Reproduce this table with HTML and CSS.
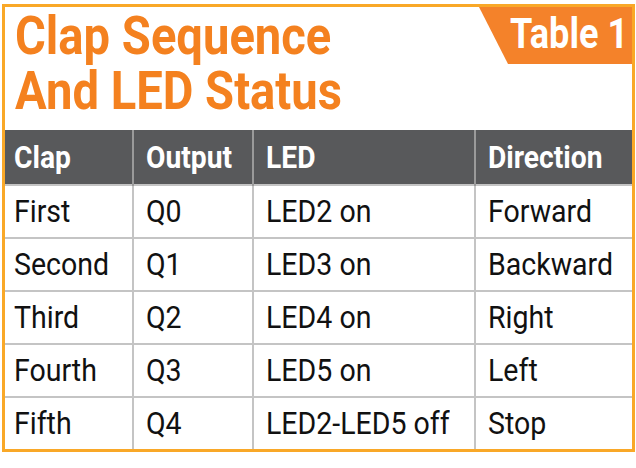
FILE: index.html
```html
<!DOCTYPE html>
<html>
<head>
<meta charset="utf-8">
<link rel="stylesheet" href="styles.css">
</head>
<body>
<div class="card">
  <div class="head">
    <h1 class="title"><span class="sq">Clap Sequence</span><br><span class="sq">And LED Status</span></h1>
    <div class="badge"><span class="sq">Table 1</span></div>
  </div>
  <table class="grid">
    <colgroup>
      <col class="c1"><col class="c2"><col class="c3"><col class="c4">
    </colgroup>
    <thead>
      <tr><th><span class="sq">Clap</span></th><th><span class="sq">Output</span></th><th><span class="sq">LED</span></th><th><span class="sq">Direction</span></th></tr>
    </thead>
    <tbody>
      <tr><td><span class="sq">First</span></td><td><span class="sq">Q0</span></td><td><span class="sq">LED2 on</span></td><td><span class="sq">Forward</span></td></tr>
      <tr><td><span class="sq">Second</span></td><td><span class="sq">Q1</span></td><td><span class="sq">LED3 on</span></td><td><span class="sq">Backward</span></td></tr>
      <tr><td><span class="sq">Third</span></td><td><span class="sq">Q2</span></td><td><span class="sq">LED4 on</span></td><td><span class="sq">Right</span></td></tr>
      <tr><td><span class="sq">Fourth</span></td><td><span class="sq">Q3</span></td><td><span class="sq">LED5 on</span></td><td><span class="sq">Left</span></td></tr>
      <tr><td><span class="sq">Fifth</span></td><td><span class="sq">Q4</span></td><td><span class="sq">LED2-LED5 off</span></td><td><span class="sq">Stop</span></td></tr>
    </tbody>
  </table>
</div>
</body>
</html>
```
FILE: styles.css
```css
html, body {
  margin: 0;
  padding: 0;
  background: #ffffff;
}
body {
  font-family: Roboto, "Liberation Sans", sans-serif;
}
.sq {
  display: inline-block;
  transform-origin: left center;
  white-space: nowrap;
}
.card {
  position: relative;
  margin: 4px 1px 0 2px;
  width: 627px;
  border: 3px solid #f9a828;
  background: #fff;
}
.head {
  height: 123px;
  position: relative;
}
.title {
  margin: 0;
  padding: 2px 0 0 10px;
  font-size: 53px;
  line-height: 55px;
  font-weight: bold;
  color: #f4811f;
}
.title .sq { transform: scaleX(0.89); }
.badge {
  position: absolute;
  top: 0;
  right: 0;
  width: 153px;
  height: 57px;
  background: #f4822a;
  clip-path: polygon(0 0, 100% 0, 100% 100%, 29px 100%);
  color: #fff;
  font-weight: bold;
  font-size: 42px;
  line-height: 54px;
  padding-left: 31px;
  box-sizing: border-box;
}
.badge .sq { transform: scaleX(0.86); }
.grid {
  width: 100%;
  border-collapse: collapse;
  table-layout: fixed;
}
.c1 { width: 128px; }
.c2 { width: 120px; }
.c3 { width: 222px; }
.c4 { width: auto; }
th, td {
  text-align: left;
  padding: 0 0 0 12px;
  border-left: 2px solid #c4c4c4;
  white-space: nowrap;
  overflow: visible;
}
th:first-child, td:first-child {
  border-left: none;
  padding-left: 9px;
}
th {
  background: #58595b;
  color: #fff;
  font-size: 31px;
  font-weight: bold;
  height: 54px;
}
th .sq { transform: scaleX(0.91); }
td {
  border-top: 2px solid #c4c4c4;
  font-size: 31px;
  color: #111;
  height: 51px;
}
td .sq { transform: scaleX(0.92); }
thead th { border-left-color: #9a9a9a; }
```
